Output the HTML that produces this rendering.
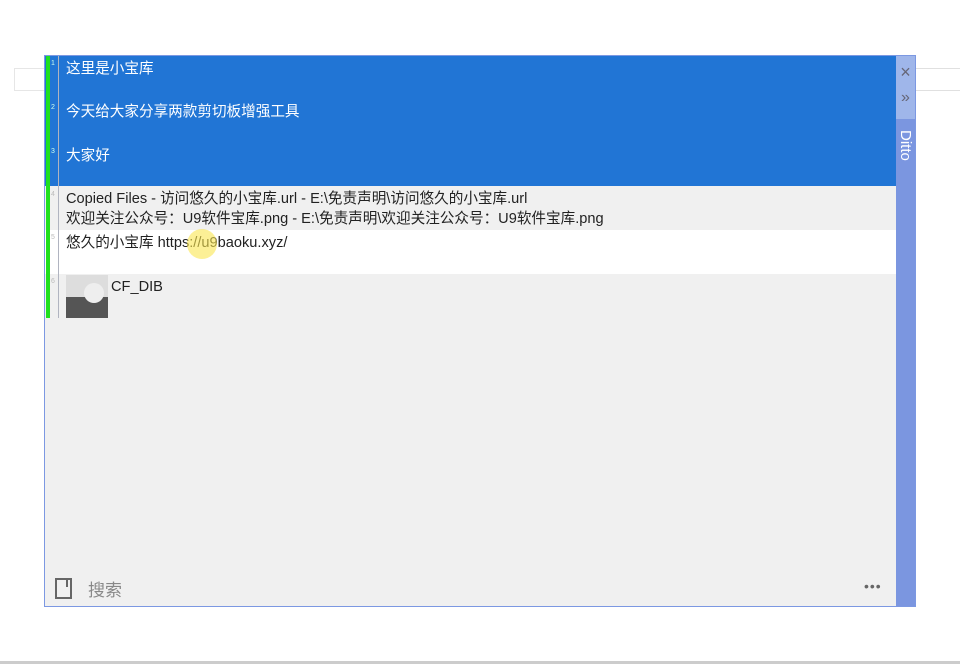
<!DOCTYPE html><html><head><meta charset="utf-8"><style>
body{margin:0;width:960px;height:664px;background:#fff;position:relative;overflow:hidden;font-family:"Liberation Sans","Noto Sans CJK SC",sans-serif;}
div{position:absolute;box-sizing:border-box}
.t{font-size:14.6px;color:#222;white-space:nowrap;line-height:20px}
.n{font-size:7px;color:#bbb}
</style></head><body>
<div style="left:14px;top:68px;width:32px;height:23px;border:1px solid #e6e6e6;border-right:none"></div>
<div style="left:914px;top:68px;width:46px;height:23px;border-top:1px solid #e0e0e0;border-bottom:1px solid #e0e0e0"></div>
<div style="left:0;top:661px;width:960px;height:3px;background:#ccc"></div>
<div style="left:44px;top:55px;width:872px;height:552px;border:1px solid #7c98e2;background:#f0f0f0"></div>
<div style="left:45px;top:56px;width:851px;height:130px;background:#2175d5"></div>
<div style="left:45px;top:230px;width:851px;height:44px;background:#fff"></div>
<div style="left:46px;top:56px;width:4px;height:262px;background:#1fe01f"></div>
<div style="left:58px;top:56px;width:1px;height:262px;background:#b0b4c0"></div>
<div style="left:896px;top:56px;width:19px;height:550px;background:#7b96e0"></div>
<div style="left:896px;top:56px;width:19px;height:63px;background:#9fb6ea"></div>
<div style="left:897px;top:60px;font-size:18px;color:#667;line-height:24px;width:17px;text-align:center">×</div>
<div style="left:897px;top:88px;font-size:16px;color:#667;line-height:20px;width:17px;text-align:center">»</div>
<div style="left:897px;top:130px;width:17px;height:40px;"><div style="left:17px;top:0;transform-origin:0 0;transform:rotate(90deg);color:#fff;font-size:15px;white-space:nowrap">Ditto</div></div>
<div class="n" style="left:51px;top:60px;color:#cfe">1</div>
<div class="n" style="left:51px;top:104px;color:#cfe">2</div>
<div class="n" style="left:51px;top:148px;color:#cfe">3</div>
<div class="n" style="left:51px;top:191px">4</div>
<div class="n" style="left:51px;top:234px">5</div>
<div class="n" style="left:51px;top:278px">6</div>
<div class="t" style="left:66px;top:59px;color:#fff">这里是小宝库</div>
<div class="t" style="left:66px;top:102px;color:#fff">今天给大家分享两款剪切板增强工具</div>
<div class="t" style="left:66px;top:146px;color:#fff">大家好</div>
<div class="t" style="left:66px;top:189px">Copied Files - 访问悠久的小宝库.url - E:\免责声明\访问悠久的小宝库.url</div>
<div class="t" style="left:66px;top:209px">欢迎关注公众号：U9软件宝库.png - E:\免责声明\欢迎关注公众号：U9软件宝库.png</div>
<div class="t" style="left:66px;top:233px">悠久的小宝库 https://u9baoku.xyz/</div>
<div style="left:187px;top:229px;width:30px;height:30px;border-radius:50%;background:rgba(250,230,80,.6)"></div>
<div style="left:66px;top:275px;width:42px;height:43px;background:#ddd;overflow:hidden"><div style="left:0;top:22px;width:42px;height:21px;background:#555"></div><div style="left:18px;top:8px;width:20px;height:20px;border-radius:50%;background:#eee"></div></div>
<div class="t" style="left:111px;top:277px">CF_DIB</div>
<div style="left:55px;top:578px;width:17px;height:21px;border:2px solid #666"></div>
<div style="left:66px;top:578px;width:2px;height:9px;background:#666"></div>
<div style="left:88px;top:576px;font-size:17px;color:#888">搜索</div>
<div style="left:864px;top:578px;font-size:14px;color:#666;letter-spacing:1px">•••</div>
</body></html>
